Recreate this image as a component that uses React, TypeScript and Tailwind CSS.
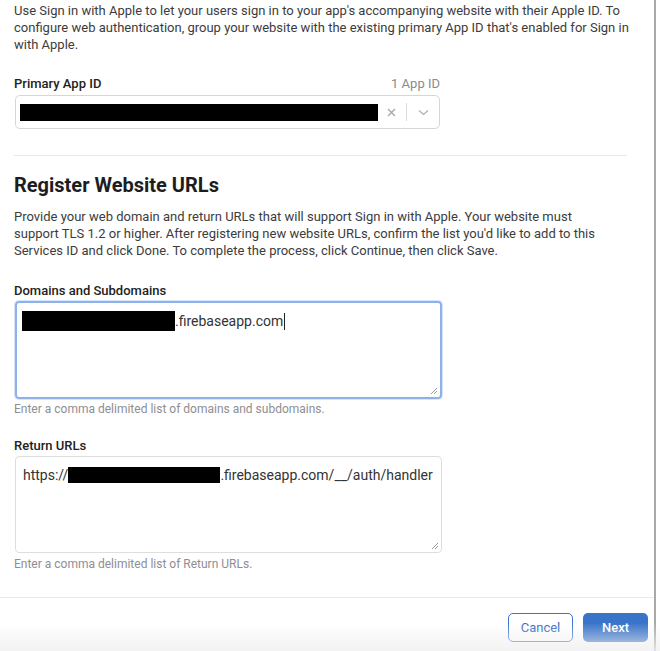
import React from "react";

function Redacted({ w, h = 18 }: { w: number; h?: number }) {
  return <span className="inline-block bg-black align-middle" style={{ width: w, height: h }} />;
}

function ResizeGrip() {
  return (
    <svg width="9" height="9" viewBox="0 0 9 9" className="absolute bottom-[2px] right-[2px]">
      <path d="M8 2 L2 8 M8 5 L5 8" stroke="#9a9a9a" strokeWidth="1" fill="none" />
    </svg>
  );
}

export default function App() {
  return (
    <div
      className="relative w-[660px] h-[651px] overflow-hidden bg-white flex"
      style={{ fontFamily: "Roboto, 'Liberation Sans', sans-serif" }}
    >
      <div className="w-[656px] shrink-0 border-r-2 border-[#a9a9a9] flex flex-col">
        <div className="pl-[14px] pr-[20px]">
          {/* intro */}
          <p className="mt-[2px] text-[13px] leading-[17px] text-[#3c3c3c]">
            Use Sign in with Apple to let your users sign in to your app's accompanying website with their Apple ID. To
            <br />
            configure web authentication, group your website with the existing primary App ID that's enabled for Sign in
            <br />
            with Apple.
          </p>

          {/* primary app id */}
          <div className="mt-[22px] w-[426px] flex items-center justify-between text-[13px] leading-[17px]">
            <span className="text-[#222] font-medium">Primary App ID</span>
            <span className="text-[#8a8a8e]">1 App ID</span>
          </div>
          <div className="mt-[3px] ml-[1px] w-[425px] h-[34px] rounded-[5px] border border-[#d6d6d6] flex items-center pl-[4px]">
            <Redacted w={358} h={17} />
            <div className="flex-1 flex items-center justify-end pr-[10px] gap-[10px]">
              <svg width="9" height="9" viewBox="0 0 9 9">
                <path d="M1 1 L8 8 M8 1 L1 8" stroke="#a7a7a7" strokeWidth="1.4" />
              </svg>
              <span className="w-px h-[18px] bg-[#dcdcdc]" />
              <svg width="11" height="7" viewBox="0 0 11 7" className="ml-[1px]">
                <path d="M1 1.5 L5.5 5.5 L10 1.5" stroke="#b0b0b0" strokeWidth="1.3" fill="none" />
              </svg>
            </div>
          </div>
        </div>

        <div className="mt-[26px] ml-[14px] w-[613px] h-px bg-[#e8e8e8]" />

        <div className="pl-[14px] pr-[20px]">
          <h2 className="mt-[17px] text-[20px] leading-[24px] font-bold text-[#1d1d1f]">Register Website URLs</h2>
          <p className="mt-[11px] text-[13px] leading-[17px] text-[#3c3c3c]">
            Provide your web domain and return URLs that will support Sign in with Apple. Your website must
            <br />
            support TLS 1.2 or higher. After registering new website URLs, confirm the list you'd like to add to this
            <br />
            Services ID and click Done. To complete the process, click Continue, then click Save.
          </p>

          {/* domains */}
          <div className="mt-[23px] text-[13px] leading-[17px] font-medium text-[#222]">Domains and Subdomains</div>
          <div className="relative mt-[2px] ml-[1px] w-[427px] h-[98px] rounded-[4px] border-2 border-[#8fb1ea] shadow-[0_0_0_1px_rgba(143,177,234,0.35)] pl-[5px] pt-[8px]">
            <div className="flex items-center text-[14px] leading-[20px] text-[#333]">
              <Redacted w={153} h={20} />
              <span>.firebaseapp.com</span>
              <span className="ml-[1px] w-px h-[17px] bg-[#222]" />
            </div>
            <ResizeGrip />
          </div>
          <div className="mt-[2px] text-[12px] leading-[16px] text-[#8e8e93]">
            Enter a comma delimited list of domains and subdomains.
          </div>

          {/* return urls */}
          <div className="mt-[20px] text-[13px] leading-[17px] font-medium text-[#222]">Return URLs</div>
          <div className="relative mt-[2px] ml-[1px] w-[427px] h-[97px] rounded-[4px] border border-[#dedede] pl-[7px] pt-[9px]">
            <div className="flex items-center text-[14px] leading-[18px] text-[#333]">
              <span>https://</span>
              <Redacted w={152} h={16} />
              <span>.firebaseapp.com/__/auth/handler</span>
            </div>
            <ResizeGrip />
          </div>
          <div className="mt-[3px] text-[12px] leading-[16px] text-[#8e8e93]">
            Enter a comma delimited list of Return URLs.
          </div>
        </div>

        <div className="mt-[25px] h-px bg-[#ebebeb]" />

        <div className="mt-[15px] flex justify-end gap-[10px] pr-[6px]">
          <button className="w-[65px] h-[29px] rounded-[5px] border border-[#3b74c8] bg-white text-[13px] text-[#2f6bc4]">
            Cancel
          </button>
          <button className="w-[65px] h-[29px] rounded-[5px] bg-[#3a74c8] text-[13px] font-medium text-white">
            Next
          </button>
        </div>
      </div>

      {/* bottom fade */}
      <div className="pointer-events-none absolute left-0 right-0 bottom-0 h-[28px] bg-gradient-to-b from-white/0 to-[#efefef]/80" />
    </div>
  );
}
